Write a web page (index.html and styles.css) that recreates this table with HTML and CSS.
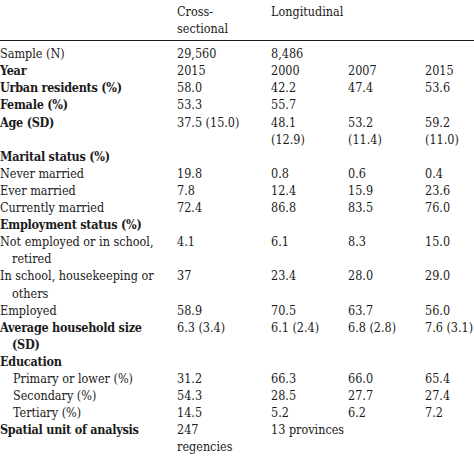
FILE: index.html
```html
<!DOCTYPE html>
<html>
<head>
<meta charset="utf-8">
<link rel="stylesheet" href="styles.css">
</head>
<body>
<table class="tbl">
  <colgroup>
    <col class="c1"><col class="c2"><col class="c3"><col class="c4"><col class="c5">
  </colgroup>
  <thead>
    <tr>
      <th></th>
      <th>Cross-<br>sectional</th>
      <th colspan="3">Longitudinal</th>
    </tr>
  </thead>
  <tbody>
    <tr class="first"><td>Sample (N)</td><td>29,560</td><td>8,486</td><td></td><td></td></tr>
    <tr><td class="b">Year</td><td>2015</td><td>2000</td><td>2007</td><td>2015</td></tr>
    <tr><td class="b">Urban residents (%)</td><td>58.0</td><td>42.2</td><td>47.4</td><td>53.6</td></tr>
    <tr><td class="b">Female (%)</td><td>53.3</td><td>55.7</td><td></td><td></td></tr>
    <tr><td class="b">Age (SD)</td><td>37.5 (15.0)</td><td>48.1<br>(12.9)</td><td>53.2<br>(11.4)</td><td>59.2<br>(11.0)</td></tr>
    <tr><td class="b" colspan="5">Marital status (%)</td></tr>
    <tr><td>Never married</td><td>19.8</td><td>0.8</td><td>0.6</td><td>0.4</td></tr>
    <tr><td>Ever married</td><td>7.8</td><td>12.4</td><td>15.9</td><td>23.6</td></tr>
    <tr><td>Currently married</td><td>72.4</td><td>86.8</td><td>83.5</td><td>76.0</td></tr>
    <tr><td class="b" colspan="5">Employment status (%)</td></tr>
    <tr><td class="hang">Not employed or in school,<br>retired</td><td>4.1</td><td>6.1</td><td>8.3</td><td>15.0</td></tr>
    <tr><td class="hang">In school, housekeeping or<br>others</td><td>37</td><td>23.4</td><td>28.0</td><td>29.0</td></tr>
    <tr><td>Employed</td><td>58.9</td><td>70.5</td><td>63.7</td><td>56.0</td></tr>
    <tr><td class="b hang">Average household size<br>(SD)</td><td>6.3 (3.4)</td><td>6.1 (2.4)</td><td>6.8 (2.8)</td><td>7.6 (3.1)</td></tr>
    <tr><td class="b" colspan="5">Education</td></tr>
    <tr><td class="ind">Primary or lower (%)</td><td>31.2</td><td>66.3</td><td>66.0</td><td>65.4</td></tr>
    <tr><td class="ind">Secondary (%)</td><td>54.3</td><td>28.5</td><td>27.7</td><td>27.4</td></tr>
    <tr><td class="ind">Tertiary (%)</td><td>14.5</td><td>5.2</td><td>6.2</td><td>7.2</td></tr>
    <tr><td class="b">Spatial unit of analysis</td><td>247<br>regencies</td><td colspan="3">13 provinces</td></tr>
  </tbody>
</table>
</body>
</html>
```
FILE: styles.css
```css
html, body {
  margin: 0;
  padding: 0;
  background: #ffffff;
}
.tbl {
  border-collapse: collapse;
  table-layout: fixed;
  width: 480px;
  font-family: "DejaVu Serif Condensed", "DejaVu Serif", serif;
  font-stretch: condensed;
  font-size: 12.5px;
  line-height: 17.1px;
  color: #1a1a1a;
}
.c1 { width: 177px; }
.c2 { width: 94px; }
.c3 { width: 77px; }
.c4 { width: 77px; }
.c5 { width: 55px; }
.tbl th, .tbl td {
  padding: 0;
  text-align: left;
  vertical-align: top;
  white-space: nowrap;
  font-weight: normal;
}
.tbl thead th {
  padding-top: 2.5px;
  padding-bottom: 3px;
  border-bottom: 1.5px solid #1a1a1a;
}
.tbl tr.first td {
  padding-top: 4.5px;
}
.tbl td.b {
  font-weight: bold;
  letter-spacing: -0.25px;
}
.tbl td.hang {
  padding-left: 12px;
  text-indent: -12px;
}
.tbl td.ind {
  padding-left: 13px;
}
```
